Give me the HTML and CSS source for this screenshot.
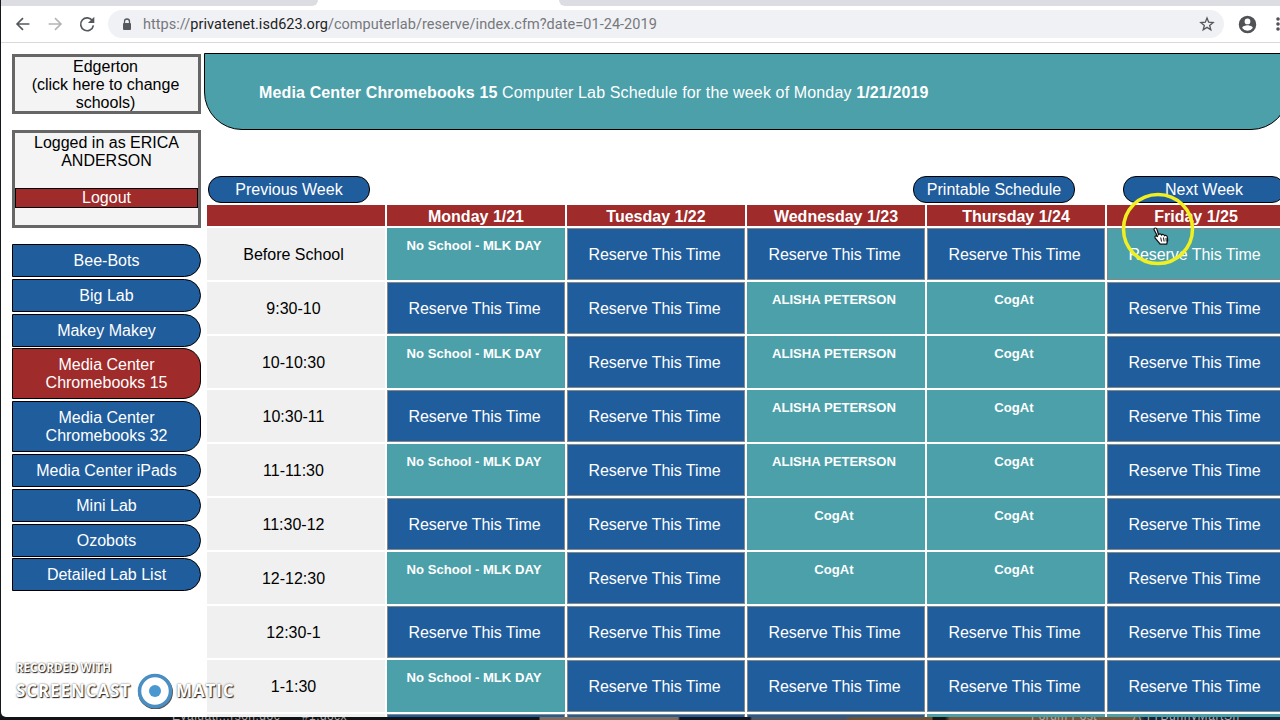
FILE: index.html
```
<!DOCTYPE html>
<html lang="en">
<head>
    <meta charset="UTF-8">
    <title>Computer Lab Schedule</title>
    <link rel="stylesheet" href="styles.css">
</head>
<body>
<div class="window">
    <div class="tabs">
        <div class="tab-left"></div>
        <div class="tab-right"></div>
    </div>
    <div class="toolbar">
        <svg class="nav" viewBox="0 0 24 24"><path d="M19 12H6M12 5.5L5.5 12l6.5 6.5"/></svg>
        <svg class="nav disabled" viewBox="0 0 24 24"><path d="M5 12h13M12 5.5l6.5 6.5-6.5 6.5"/></svg>
        <svg class="nav" viewBox="0 0 24 24"><path d="M18 8.5A7 7 0 1 0 19 13.5"/><path class="fill" d="M20 4v7h-7z"/></svg>
        <div class="address">
            <svg class="lock" viewBox="0 0 10 13"><path d="M2.5 6V3.5a2.5 2.5 0 0 1 5 0V6"/><rect x="1" y="5" width="8" height="7" rx="1"/></svg>
            <span class="url">https://<b>privatenet.isd623.org</b>/computerlab/reserve/index.cfm?date=01-24-2019</span>
            <svg class="star" viewBox="0 0 24 24"><path d="M12 3l2.500 6.300 6.700.5-5.200 4.300 1.700 6.500L12 17l-5.700 3.600 1.700-6.500L2.800 9.800l6.700-.5z"/></svg>
        </div>
        <svg class="user" viewBox="0 0 24 24"><path d="M12 2a10 10 0 1 0 0 20 10 10 0 0 0 0-20zm0 3.200a3.300 3.300 0 1 1 0 6.600 3.300 3.300 0 0 1 0-6.600zm0 14a7.200 7.200 0 0 1-6-3.200c0-2 4-3.100 6-3.100s6 1.100 6 3.100a7.200 7.200 0 0 1-6 3.200z"/></svg>
        <svg class="dots" viewBox="0 0 4 14"><circle cx="2" cy="2" r="1.800"/><circle cx="2" cy="7" r="1.800"/><circle cx="2" cy="12" r="1.800"/></svg>
    </div>

    <div class="page">
        <div class="sidebar">
            <div class="box school">Edgerton<br>(click here to change schools)</div>
            <div class="box login">Logged in as ERICA ANDERSON
                <div class="logout">Logout</div>
            </div>
            <ul class="labs">
                <li>Bee-Bots</li>
                <li>Big Lab</li>
                <li>Makey Makey</li>
                <li class="current">Media Center<br>Chromebooks 15</li>
                <li>Media Center<br>Chromebooks 32</li>
                <li>Media Center iPads</li>
                <li>Mini Lab</li>
                <li>Ozobots</li>
                <li>Detailed Lab List</li>
            </ul>
        </div>

        <div class="main">
            <div class="banner"><b>Media Center Chromebooks 15</b> Computer Lab Schedule for the week of Monday <b>1/21/2019</b></div>
            <div class="buttons">
                <span class="button">Previous Week</span>
                <span class="button print">Printable Schedule</span>
                <span class="button">Next Week</span>
            </div>
            <div class="schedule" id="schedule">
                <div class="head"></div>
                <div class="head">Monday 1/21</div>
                <div class="head">Tuesday 1/22</div>
                <div class="head">Wednesday 1/23</div>
                <div class="head">Thursday 1/24</div>
                <div class="head">Friday 1/25</div>
            </div>
        </div>
    </div>
</div>

<div class="desktop">
    <span class="file file-1">Evaluati...rson.doc</span>
    <span class="file file-2">#1.docx</span>
    <span class="file file-3">Forum Post</span>
    <span class="file file-4">A TTBunnyMartSh</span>
</div>

<div class="watermark">
    <div class="small">RECORDED WITH</div>
    <div class="brand">
        <span class="screencast">SCREENCAST</span>
        <svg viewBox="0 0 36 36"><circle class="shade" cx="18.500" cy="19" r="15.500"/><circle class="ring" cx="18" cy="18" r="15.500"/><circle class="dot" cx="18" cy="18" r="6"/></svg>
        <span class="matic">MATIC</span>
    </div>
</div>

<svg class="pointer" viewBox="0 0 74 74">
    <circle cx="37" cy="37" r="34.500"/>
    <path d="M33 37.500c0-2 2.500-2 3 0l1.500 5c1-1 2.500-.8 3 .5 1-1 2.500-.5 3 .7 1-.7 2.500-.2 2.700 1l.5 3.500-1 4h-6.500l-5-6c-1-2 .8-3 2.200-1.700l.3.3z"/>
    <path class="fingers" d="M39.700 45.500l.8 4M42.500 45.500l.6 4M45 46l.3 3.500"/>
</svg>

<script>
    const free = "Reserve This Time";
    const mlk = "No School - MLK DAY";
    const alisha = "ALISHA PETERSON";
    const cog = "CogAt";

    const rows = [
        ["Before School", mlk, free, free, free, free],
        ["9:30-10", free, free, alisha, cog, free],
        ["10-10:30", mlk, free, alisha, cog, free],
        ["10:30-11", free, free, alisha, cog, free],
        ["11-11:30", mlk, free, alisha, cog, free],
        ["11:30-12", free, free, cog, cog, free],
        ["12-12:30", mlk, free, cog, cog, free],
        ["12:30-1", free, free, free, free, free],
        ["1-1:30", mlk, free, free, free, free]
    ];

    const schedule = document.getElementById("schedule");

    function addCell(className, text) {
        const cell = document.createElement("div");
        cell.className = className;
        cell.textContent = text;
        schedule.appendChild(cell);
    }

    rows.forEach((row, r) => {
        row.forEach((text, c) => {
            if (c === 0) {
                addCell("time", text);
            } else if (r === 0 && c === 5) {
                // the cell under the mouse
                addCell("free hover", text);
            } else {
                addCell(text === free ? "free" : "taken", text);
            }
        });
    });

    // top edge of the next row
    ["time", "free", "free", "free", "taken", "taken"].forEach(name => addCell(name, ""));
</script>
</body>
</html>
```
FILE: styles.css
```
* {
    margin: 0;
    padding: 0;
    box-sizing: border-box;
}

body {
    width: 1280px;
    height: 720px;
    overflow: hidden;
    position: relative;
    background: #15181d;
    font: 16px/18px "Liberation Sans", Arial, sans-serif;
}

.window {
    height: 717px;
    margin-left: 1px;
    overflow: hidden;
    background: #fff;
    border-bottom-left-radius: 5px;
}

/* browser */
.tabs {
    height: 6px;
    display: flex;
    justify-content: space-between;
}

.tab-left {
    width: 317px;
    background: #dcdde3;
    border-bottom-right-radius: 6px;
}

.tab-right {
    width: 721px;
    background: #dcdde3;
    border-bottom-left-radius: 6px;
}

.toolbar {
    height: 37px;
    display: flex;
    align-items: center;
    padding-left: 11px;
    border-bottom: 1px solid #d9d9da;
}

.nav {
    width: 22px;
    height: 22px;
    margin-right: 10px;
    fill: none;
    stroke: #55585c;
    stroke-width: 1.8;
    flex: none;
}

.nav .fill {
    fill: #55585c;
    stroke: none;
}

.disabled {
    stroke: #b4b5b8;
}

.address {
    width: 1116px;
    height: 28px;
    padding: 0 9px 0 14px;
    display: flex;
    align-items: center;
    flex: none;
    border-radius: 14px;
    background: #f0f1f5;
}

.lock {
    width: 10px;
    height: 13px;
    margin-right: 11px;
    fill: #55585c;
}

.lock path {
    fill: none;
    stroke: #55585c;
    stroke-width: 1.3;
}

.url {
    padding-top: 2px;
    font-family: Roboto, sans-serif;
    font-size: 14.5px;
    letter-spacing: 0.04px;
    color: #76787b;
    white-space: nowrap;
}

.url b {
    font-weight: normal;
    color: #222;
}

.star {
    width: 16px;
    height: 16px;
    margin-left: auto;
    fill: none;
    stroke: #55585c;
    stroke-width: 2;
}

.user {
    width: 21px;
    height: 21px;
    margin: 0 18px 0 13px;
    flex: none;
    fill: #505256;
}

.dots {
    width: 4px;
    height: 14px;
    flex: none;
    fill: #505256;
}

/* page */
.page {
    display: flex;
    padding: 10px 0 0 11px;
}

.sidebar {
    width: 189px;
    margin-right: 3px;
    padding-top: 1px;
    flex: none;
    text-align: center;
}

.box {
    border: 3px solid #666;
    background: #f4f4f4;
}

.school {
    height: 60px;
    padding: 1px 10px 0 8px;
}

.login {
    height: 98px;
    margin-top: 16px;
    padding-top: 1px;
}

.logout {
    height: 20px;
    margin-top: 18px;
    border: 1px solid #000;
    background: #9f2b2b;
    color: #fff;
}

.labs {
    margin-top: 16px;
    list-style: none;
}

.labs li {
    margin-bottom: 1.8px;
    padding: 7px 0 6px;
    border: 1px solid #000;
    border-radius: 0 18px 18px 0;
    background: #205d9d;
    color: #fff;
}

.labs .current {
    background: #9f2b2b;
}

.main {
    width: 1085px;
    flex: none;
}

.banner {
    height: 77px;
    padding: 30px 0 0 54px;
    border: 1px solid #000;
    border-radius: 0 0 38px 38px;
    background: #4ba0aa;
    color: #fff;
    letter-spacing: 0.14px;
    white-space: nowrap;
}

.buttons {
    display: flex;
    margin: 46px 0 2px 4px;
}

.button {
    width: 162px;
    height: 27px;
    padding-top: 4px;
    flex: none;
    border: 1px solid #000;
    border-radius: 13px;
    background: #205d9d;
    color: #fff;
    text-align: center;
}

.print {
    margin: 0 48px 0 543px;
}

.schedule {
    display: grid;
    grid-template-columns: repeat(6, 178px);
    grid-template-rows: 21px;
    grid-auto-rows: 52px;
    gap: 2px;
    margin-left: 3px;
    color: #fff;
    text-align: center;
}

.head {
    padding-top: 3px;
    background: #9f2b2b;
    font-weight: bold;
}

.time {
    padding-top: 18px;
    padding-right: 5px;
    background: #f0f0f0;
    color: #000;
}

.free {
    padding: 17px 3px 0 0;
    border: 1px solid #84898c;
    background: #205d9d;
    letter-spacing: -0.05px;
}

.taken {
    padding: 9px 4px 0 0;
    background: #4ba0aa;
    font-size: 13.1px;
    font-weight: bold;
}

.hover {
    background: #4ba0aa;
}

/* desktop below the window */
.desktop {
    position: absolute;
    left: 0;
    top: 717px;
    width: 1280px;
    height: 3px;
    overflow: hidden;
    background: linear-gradient(90deg, #111317 0 539px, #826c5e 540px 678px, #12161e 680px 750px, #4d535c 752px 845px, #6f502f 850px 932px, #16130f 933px 945px, #765638 950px 1135px, #172232 1145px);
}

.file {
    position: absolute;
    top: -8px;
    font-size: 12px;
    line-height: 14px;
    color: #aaa;
    white-space: nowrap;
}

.file-1 {
    left: 172px;
    letter-spacing: 0.5px;
}

.file-2 {
    left: 302px;
    letter-spacing: 0.4px;
}

.file-3 {
    left: 1031px;
    letter-spacing: 0.4px;
}

.file-4 {
    left: 1133px;
    letter-spacing: 0.6px;
}

/* recorder logo */
.watermark {
    position: absolute;
    left: 16px;
    top: 661px;
    color: #fff;
    font-family: "Open Sans", sans-serif;
    font-weight: bold;
    text-shadow: 1px 1px 1px #222, 0 0 2px #555;
}

.small {
    font-size: 11.5px;
    line-height: 14px;
}

.brand {
    display: flex;
    align-items: center;
    margin-top: -2px;
    font-size: 17px;
    letter-spacing: 0.9px;
}

.screencast {
    width: 121px;
}

.brand svg {
    width: 36px;
    height: 36px;
    margin-right: 3px;
}

.shade {
    fill: none;
    stroke: #555;
    stroke-width: 4;
}

.ring {
    fill: #fff;
    stroke: #4a8fc4;
    stroke-width: 3.5;
}

.dot {
    fill: #4a98d2;
}

/* mouse */
.pointer {
    position: absolute;
    left: 1121px;
    top: 192px;
    width: 74px;
    height: 74px;
}

.pointer circle {
    fill: none;
    stroke: #f0f020;
    stroke-width: 3.5;
}

.pointer path {
    fill: #fff;
    stroke: #111;
    stroke-width: 1.2;
}

.pointer .fingers {
    fill: none;
    stroke-width: 1;
}
```
